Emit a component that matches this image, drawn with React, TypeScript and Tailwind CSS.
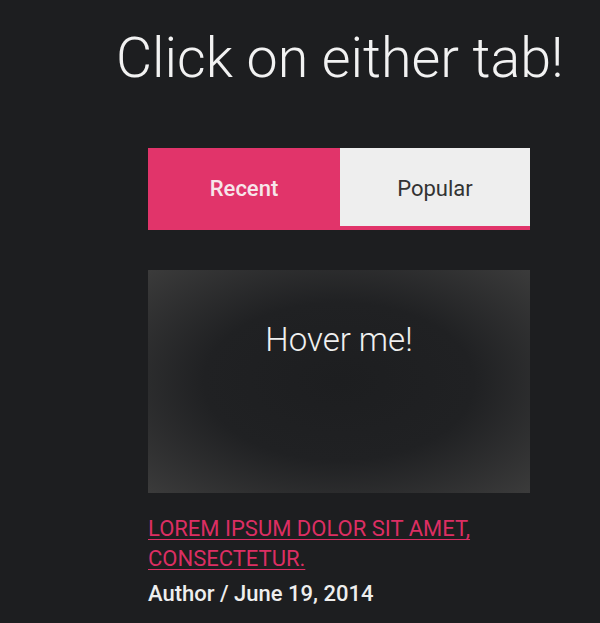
export default function App() {
  return (
    <div className="min-h-[623px] w-[600px] bg-[#1d1e20] font-['Roboto',sans-serif] overflow-hidden">
      <h1 className="pt-[25px] pl-[116px] text-[55.6px] leading-[66px] font-light text-[#f2f2f2] whitespace-nowrap">
        Click on either tab!
      </h1>
      <div className="ml-[148px] w-[382px] mt-[57px]">
        <div className="flex h-[82px] bg-[#e1346a] pb-[4px]">
          <div className="flex w-[192px] items-center justify-center text-[22px] font-medium text-[#f6e6ea] pt-[2px]">
            Recent
          </div>
          <div className="flex flex-1 items-center justify-center bg-[#eeeeee] text-[22px] text-[#333333] pt-[2px]">
            Popular
          </div>
        </div>
        <div className="mt-[40px] flex h-[223px] justify-center bg-[radial-gradient(ellipse_at_center,#1d1e20_0%,#202123_50%,#3b3b3b_100%)]">
          <span className="mt-[48px] text-[33px] leading-[44px] font-light text-[#f0f0f0]">Hover me!</span>
        </div>
        <a
          href="#"
          className="mt-[21px] block text-[22px] leading-[30px] text-[#dc2e63] underline decoration-1 underline-offset-[3px]"
        >
          LOREM IPSUM DOLOR SIT AMET,
          <br />
          CONSECTETUR.
        </a>
        <div className="mt-[7px] text-[22px] leading-[26px] font-medium text-[#eeeeee]">
          Author / June 19, 2014
        </div>
      </div>
    </div>
  );
}
